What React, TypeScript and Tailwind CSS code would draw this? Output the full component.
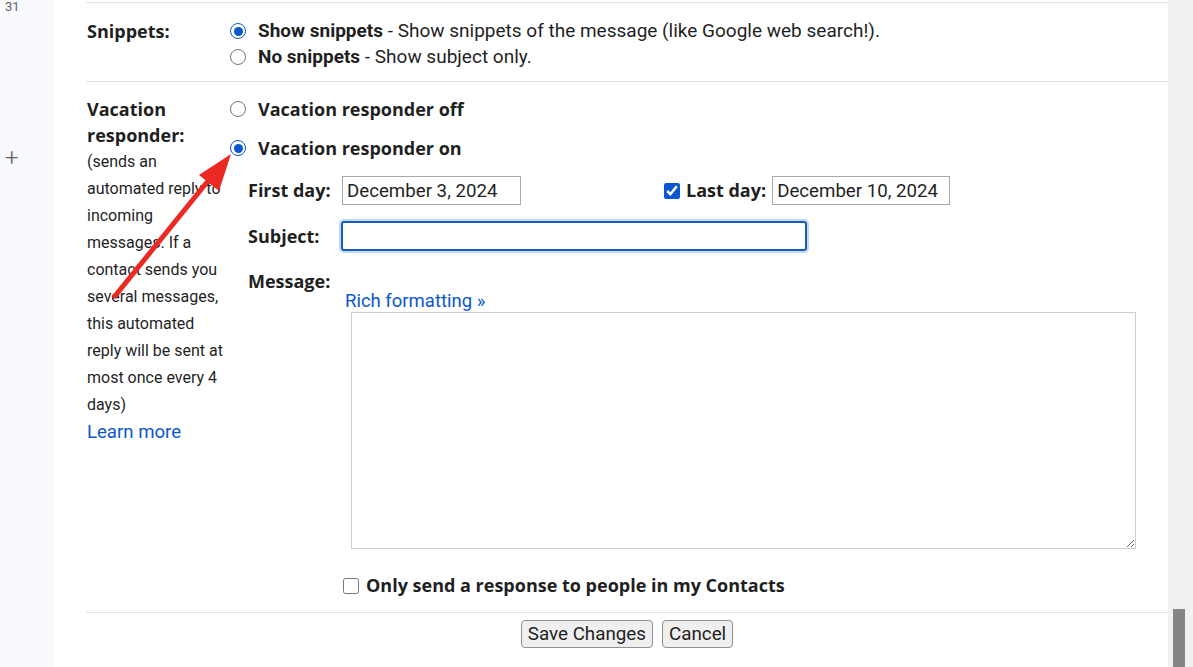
import React from "react";

const Radio: React.FC<{ checked?: boolean }> = ({ checked }) => (
  <span
    className={`inline-flex h-[16px] w-[16px] shrink-0 items-center justify-center rounded-full border-[1.5px] ${
      checked ? "border-[#0b57d0]" : "border-[#767676]"
    } bg-white`}
  >
    {checked && <span className="h-[9px] w-[9px] rounded-full bg-[#0b57d0]" />}
  </span>
);

const help = [
  "(sends an",
  "automated reply to",
  "incoming",
  "messages. If a",
  "contact sends you",
  "several messages,",
  "this automated",
  "reply will be sent at",
  "most once every 4",
  "days)",
];

const App: React.FC = () => {
  return (
    <div className="relative flex h-[667px] w-[1193px] overflow-hidden bg-white font-['Roboto',sans-serif] text-[#1f1f1f]">
      {/* left rail */}
      <aside className="flex w-[55px] shrink-0 flex-col bg-[#f8fafd] pl-[5px] text-[#5f6368]">
        <span className="text-[13px] leading-[13px]">31</span>
        <span className="mt-[133px] text-[24px] font-light leading-[24px]">+</span>
      </aside>

      {/* settings content */}
      <main className="flex-1 pl-[31px] pt-[2px]">
        {/* snippets */}
        <div className="flex border-t border-[#e3e3e3] pb-[11px] pt-[15px]">
          <div className="w-[142px] shrink-0 pl-[1px] font-['Open_Sans',sans-serif] text-[18px] font-bold leading-[26px]">
            Snippets:
          </div>
          <div className="flex flex-col text-[19px] leading-[26px]">
            <label className="flex items-center gap-[12px] pl-[2px]">
              <Radio checked />
              <span>
                <b className="font-bold">Show snippets</b> - Show snippets of the message (like Google web search!).
              </span>
            </label>
            <label className="flex items-center gap-[12px] pl-[2px]">
              <Radio />
              <span>
                <b className="font-bold">No snippets</b> - Show subject only.
              </span>
            </label>
          </div>
        </div>

        {/* vacation responder */}
        <div className="flex border-t border-[#e3e3e3] pb-[13px] pt-[14px]">
          <div className="w-[142px] shrink-0 pl-[1px]">
            <div className="font-['Open_Sans',sans-serif] text-[18px] font-bold leading-[26px]">
              Vacation
              <br />
              responder:
            </div>
            <p className="whitespace-nowrap text-[16px] leading-[27px]">
              {help.map((line) => (
                <span key={line} className="block">
                  {line}
                </span>
              ))}
            </p>
            <a className="mt-[1px] block text-[18.6px] leading-[26px] text-[#0b57d0]">Learn more</a>
          </div>

          <div className="flex flex-1 flex-col pr-[32px]">
            <label className="flex h-[26px] items-center gap-[12px] pl-[2px] font-['Open_Sans',sans-serif] text-[18px] font-bold">
              <Radio />
              Vacation responder off
            </label>
            <label className="mt-[13px] flex h-[26px] items-center gap-[12px] pl-[2px] font-['Open_Sans',sans-serif] text-[18px] font-bold">
              <Radio checked />
              Vacation responder on
            </label>

            <div className="ml-[20px] mt-[15px] grid grid-cols-[94px_1fr] items-center gap-y-[16px]">
              <span className="font-['Open_Sans',sans-serif] text-[18px] font-bold">First day:</span>
              <div className="flex items-center">
                <input
                  readOnly
                  value="December 3, 2024"
                  className="h-[29px] w-[179px] border border-[#a9a9a9] px-[4px] text-[18.7px] outline-none"
                />
                <input
                  type="checkbox"
                  defaultChecked
                  className="ml-[143px] h-[16px] w-[16px] accent-[#0b57d0]"
                />
                <span className="ml-[6px] font-['Open_Sans',sans-serif] text-[18px] font-bold">Last day:</span>
                <input
                  readOnly
                  value="December 10, 2024"
                  className="ml-[6px] h-[29px] w-[178px] border border-[#a9a9a9] px-[4px] text-[18.7px] outline-none"
                />
              </div>

              <span className="font-['Open_Sans',sans-serif] text-[18px] font-bold">Subject:</span>
              <input className="-ml-[1px] h-[30px] w-[466px] rounded-[3px] border-2 border-[#1a5fb4] px-[4px] text-[18px] outline-none ring-2 ring-[#a8c7fa]/70" />
            </div>

            <div className="ml-[20px] mt-[17px] grid grid-cols-[94px_1fr]">
              <span className="font-['Open_Sans',sans-serif] text-[18px] font-bold leading-[26px]">Message:</span>
              <div className="pt-[22px]">
                <a className="ml-[3px] block text-[18.5px] leading-[22px] text-[#0b57d0]">Rich formatting »</a>
                <textarea className="ml-[9px] block h-[237px] w-[785px] border border-[#cfcfcf] outline-none" />
              </div>
            </div>

            <label className="ml-[115px] mt-[23px] flex items-center gap-[7px] font-['Open_Sans',sans-serif] text-[18px] font-bold">
              <input type="checkbox" className="h-[16px] w-[16px] accent-[#0b57d0]" />
              Only send a response to people in my Contacts
            </label>
          </div>
        </div>

        {/* actions */}
        <div className="flex justify-center gap-[9px] border-t border-[#e3e3e3] pt-[7px]">
          <button className="h-[28px] rounded-[4px] border border-[#8f8f8f] bg-[#efefef] px-[6px] text-[18.8px] leading-none">
            Save Changes
          </button>
          <button className="h-[28px] rounded-[4px] border border-[#8f8f8f] bg-[#efefef] px-[6px] text-[18.8px] leading-none">
            Cancel
          </button>
        </div>
      </main>

      {/* scrollbar */}
      <div className="flex w-[25px] shrink-0 items-end bg-[#f1f1f1] pl-[5px]">
        <div className="h-[58px] w-[12px] bg-[#858585]" />
      </div>

      {/* annotation arrow */}
      <svg className="pointer-events-none absolute left-0 top-0" width="1193" height="667">
        <line x1="115" y1="296" x2="212" y2="176" stroke="#ea2a23" strokeWidth="5" strokeLinecap="round" />
        <polygon points="231,154 199,175 219,191" fill="#ea2a23" />
      </svg>
    </div>
  );
};

export default App;
